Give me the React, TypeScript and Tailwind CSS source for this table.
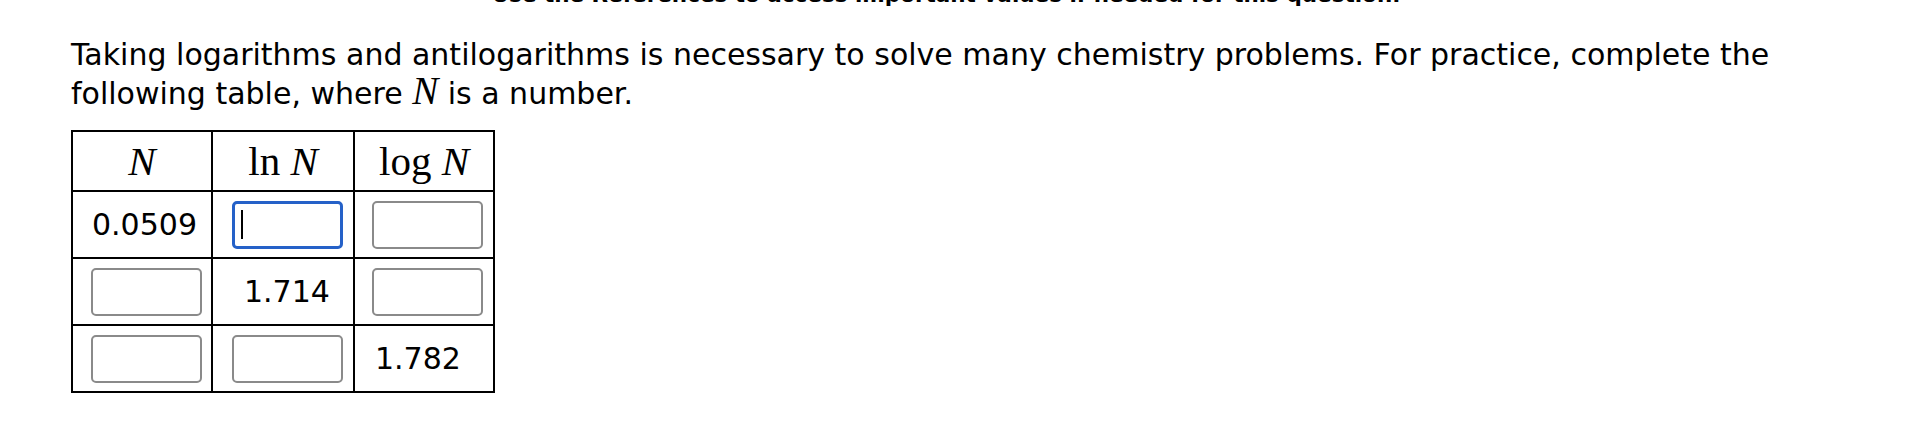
const sans = "font-['DejaVu_Sans','Verdana',sans-serif]";
const serif = "font-['Liberation_Serif','Times_New_Roman',serif]";

const MathN = ({ className = '' }: { className?: string }) => (
  <span className={`${serif} italic ${className}`}>N</span>
);

const Box = ({ focused = false }: { focused?: boolean }) =>
  focused ? (
    <div className="flex h-[48px] w-[111px] items-center rounded-[5px] border-[3px] border-[#2561c8] pl-[6px]">
      <div className="h-[29px] w-[2px] bg-black" />
    </div>
  ) : (
    <div className="h-[48px] w-[111px] rounded-[5px] border-2 border-[#8a8a8a]" />
  );

const App = () => {
  return (
    <div className={`h-[422px] w-[1910px] overflow-hidden bg-white text-black ${sans}`}>
      <div className="h-[7px] overflow-hidden">
        <p className="-mt-[17px] pr-[18px] text-center text-[21.5px] font-bold leading-[24px]">
          Use the References to access important values if needed for this question.
        </p>
      </div>

      <p className="mt-[28px] pl-[71px] text-[30px] leading-[39px]">
        Taking logarithms and antilogarithms is necessary to solve many chemistry problems. For practice, complete the
        <br />
        following table, where <MathN className="text-[39px] leading-[28px]" /> is a number.
      </p>

      <table className="ml-[71px] mt-[17px] w-[422px] table-fixed border-collapse border-2 border-black">
        <colgroup>
          <col className="w-[140px]" />
          <col className="w-[142px]" />
          <col className="w-[140px]" />
        </colgroup>
        <thead>
          <tr className="h-[60px]">
            <th className="border-2 border-black text-center text-[41px] font-normal leading-[40px]">
              <MathN />
            </th>
            <th className={`border-2 border-black text-center text-[41px] font-normal leading-[40px] ${serif}`}>
              ln <span className="italic">N</span>
            </th>
            <th className={`border-2 border-black text-center text-[41px] font-normal leading-[40px] ${serif}`}>
              log <span className="italic">N</span>
            </th>
          </tr>
        </thead>
        <tbody className="text-[30px]">
          <tr className="h-[67px]">
            <td className="border-2 border-black pl-[19px]">0.0509</td>
            <td className="border-2 border-black pl-[19px]">
              <Box focused />
            </td>
            <td className="border-2 border-black pl-[17px]">
              <Box />
            </td>
          </tr>
          <tr className="h-[67px]">
            <td className="border-2 border-black pl-[18px]">
              <Box />
            </td>
            <td className="border-2 border-black pl-[31px]">1.714</td>
            <td className="border-2 border-black pl-[17px]">
              <Box />
            </td>
          </tr>
          <tr className="h-[67px]">
            <td className="border-2 border-black pl-[18px]">
              <Box />
            </td>
            <td className="border-2 border-black pl-[19px]">
              <Box />
            </td>
            <td className="border-2 border-black pl-[20px]">1.782</td>
          </tr>
        </tbody>
      </table>
    </div>
  );
};

export default App;
